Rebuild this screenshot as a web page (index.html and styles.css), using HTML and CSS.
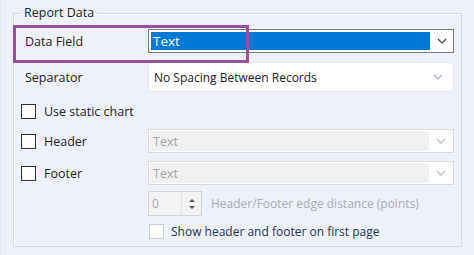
FILE: index.html
```html
<!DOCTYPE html>
<html lang="en">
<head>
  <meta charset="UTF-8">
  <title>Report Data</title>
  <link rel="stylesheet" href="styles.css">
</head>
<body>
  <div class="panel">
    <fieldset class="group">
      <legend>Report Data</legend>

      <div class="row row-field">
        <span class="label">Data Field</span>
        <div class="combo combo-active">
          <span class="combo-value">Text</span>
          <span class="combo-arrow">
            <svg width="10" height="6" viewBox="0 0 10 6"><path d="M1 1 L5 5 L9 1" fill="none" stroke="#444" stroke-width="1.2"/></svg>
          </span>
        </div>
      </div>

      <div class="row row-sep">
        <span class="label">Separator</span>
        <div class="combo combo-flat">
          <span class="combo-value">No Spacing Between Records</span>
          <span class="combo-arrow">
            <svg width="10" height="6" viewBox="0 0 10 6"><path d="M1 1 L5 5 L9 1" fill="none" stroke="#a9b0bf" stroke-width="1.2"/></svg>
          </span>
        </div>
      </div>

      <div class="row row-check">
        <span class="check"></span>
        <span class="check-label">Use static chart</span>
      </div>

      <div class="row row-opt">
        <div class="opt">
          <span class="check"></span>
          <span class="check-label">Header</span>
        </div>
        <div class="combo combo-off">
          <span class="combo-value">Text</span>
          <span class="combo-arrow">
            <svg width="10" height="6" viewBox="0 0 10 6"><path d="M1 1 L5 5 L9 1" fill="none" stroke="#b8b8b8" stroke-width="1.1"/></svg>
          </span>
        </div>
      </div>

      <div class="row row-opt row-footer">
        <div class="opt">
          <span class="check"></span>
          <span class="check-label">Footer</span>
        </div>
        <div class="combo combo-off">
          <span class="combo-value">Text</span>
          <span class="combo-arrow">
            <svg width="10" height="6" viewBox="0 0 10 6"><path d="M1 1 L5 5 L9 1" fill="none" stroke="#b8b8b8" stroke-width="1.1"/></svg>
          </span>
        </div>
      </div>

      <div class="row row-spin">
        <div class="spin">
          <span class="spin-value">0</span>
          <span class="spin-btns">
            <svg width="8" height="14" viewBox="0 0 8 14"><path d="M1 5 L4 2 L7 5 Z M1 9 L4 12 L7 9 Z" fill="#555"/></svg>
          </span>
        </div>
        <span class="muted">Header/Footer edge distance (points)</span>
      </div>

      <div class="row row-first">
        <span class="check check-off"></span>
        <span class="check-label first-label">Show header and footer on first page</span>
      </div>

      <div class="highlight"></div>
    </fieldset>
  </div>
</body>
</html>
```

FILE: styles.css
```css
body {
  margin: 0;
  background: #eef1f9;
  font-family: "Open Sans", "Noto Sans", Arial, sans-serif;
  font-size: 12px;
  color: #1e1e1e;
}
.panel {
  width: 474px;
  height: 255px;
  padding: 4px 0 0 12px;
  box-sizing: border-box;
  border-left: 1px solid #e2e5ee;
}
.group {
  position: relative;
  width: 449px;
  height: 243px;
  box-sizing: border-box;
  margin: 0;
  padding: 0 0 0 7px;
  border: 1px solid #d6dae4;
  box-shadow: inset 1px 1px 0 #fbfcff;
}
.group legend {
  padding: 0 3px;
  margin-left: 0;
  line-height: 18px;
  font-size: 12.5px;
  color: #222;
}
.row {
  display: flex;
  align-items: center;
}
.label {
  width: 127px;
  padding-left: 4px;
  box-sizing: border-box;
  flex-shrink: 0;
  font-size: 12.5px;
}
.row-field {
  margin-top: 7px;
  height: 24px;
}
.row-sep {
  margin-top: 9px;
  height: 30px;
}
.row-check {
  margin-top: 11px;
  height: 16px;
}
.row-opt {
  margin-top: 10px;
  height: 24px;
}
.row-footer {
  margin-top: 8px;
}
.row-spin {
  margin-top: 6px;
  height: 25px;
  padding-left: 127px;
}
.row-first {
  margin-top: 7px;
  height: 16px;
  padding-left: 128px;
}

.combo {
  width: 306px;
  height: 100%;
  box-sizing: border-box;
  display: flex;
  align-items: center;
}
.combo-value {
  flex: 1;
}
.combo-arrow {
  width: 23px;
  display: flex;
  justify-content: center;
}
.combo-active {
  border: 1px solid #7a7a7a;
  background: #fff;
  padding: 2px 0 2px 2px;
}
.combo-active .combo-value {
  align-self: stretch;
  background: #0078d7;
  color: #fff;
  padding-left: 2px;
  display: flex;
  align-items: center;
  font-size: 13.5px;
}
.combo-flat {
  background: #fff;
  border: 1px solid #e6e8ee;
  border-radius: 4px;
  padding-left: 5px;
  font-size: 12px;
  color: #222;
}
.combo-flat .combo-arrow {
  width: 31px;
}
.combo-off {
  border: 1px solid #d9d9d9;
  background: #fff;
  padding: 1px;
  color: #a3a3a3;
  font-size: 12.5px;
}
.combo-off .combo-value {
  align-self: stretch;
  background: #f1f1f1;
  padding-left: 3px;
  display: flex;
  align-items: center;
}

.opt {
  width: 127px;
  display: flex;
  align-items: center;
  flex-shrink: 0;
}
.check {
  width: 13px;
  height: 13px;
  border: 1px solid #333;
  background: #fff;
  flex-shrink: 0;
}
.check-off {
  border-color: #c9ccd3;
}
.check-label {
  margin-left: 8px;
  font-size: 12.5px;
}
.first-label {
  margin-left: 7px;
  font-size: 12px;
  color: #23345a;
}

.spin {
  width: 54px;
  height: 100%;
  box-sizing: border-box;
  border: 1px solid #d3d3d3;
  background: #f3f3f3;
  display: flex;
  align-items: center;
}
.spin-value {
  flex: 1;
  padding-left: 3px;
  color: #a8a8a8;
}
.spin-btns {
  width: 19px;
  height: 100%;
  display: flex;
  align-items: center;
  justify-content: center;
  border-left: 1px solid #e4e4e4;
}
.muted {
  margin-left: 9px;
  color: #a9abb2;
}

.highlight {
  position: absolute;
  left: -1px;
  top: 3px;
  width: 236px;
  height: 38px;
  box-sizing: border-box;
  border: 3px solid #98509e;
}
```
